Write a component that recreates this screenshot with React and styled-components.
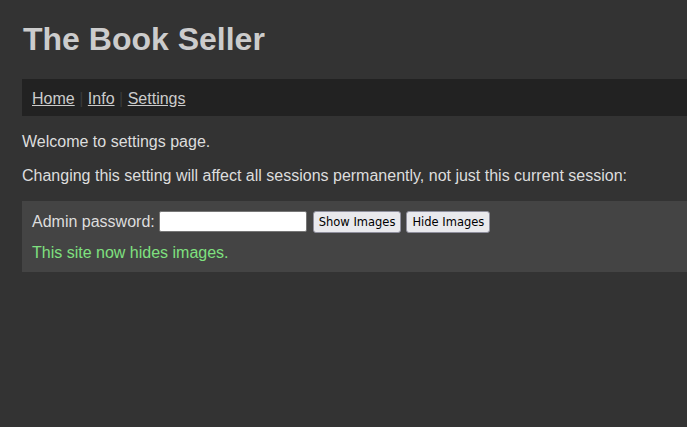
import styled, { createGlobalStyle } from "styled-components";

const GlobalStyle = createGlobalStyle`
  html, body {
    margin: 0;
    padding: 0;
    background: #333;
  }
  body {
    font-family: "Liberation Sans", Arial, sans-serif;
    font-size: 16px;
    color: #ddd;
  }
`;

const Page = styled.div`
  padding: 21px 0 0 22px;
`;

const Title = styled.h1`
  margin: 0 0 21px 1px;
  font-size: 32px;
  line-height: 37px;
  font-weight: bold;
  color: #ccc;
`;

const Nav = styled.nav`
  background: #222;
  padding: 11px 10px 8px;
  line-height: 18px;
`;

const NavLink = styled.a`
  color: #ccc;
  text-decoration: underline;
  cursor: pointer;
`;

const Sep = styled.span`
  color: #3a3a3a;
  margin: 0 4.5px;
`;

const Text = styled.p`
  margin: 17px 0 16px;
  line-height: 18px;

  & + & {
    margin-top: 16px;
  }
`;

const SettingsBox = styled.div`
  background: #444;
  padding: 10px;
  margin-top: 16px;
`;

const Row = styled.div`
  display: flex;
  align-items: center;
  gap: 5px;
  height: 21px;
`;

const Label = styled.span`
  margin-right: -1px;
`;

const Input = styled.input`
  width: 148px;
  height: 21px;
  box-sizing: border-box;
  border: 1px solid #767676;
  border-radius: 2px;
  background: #fff;
  padding: 0 2px;
  margin-right: 1px;
`;

const Button = styled.button`
  font-family: "DejaVu Sans", Tahoma, sans-serif;
  font-size: 11.5px;
  height: 22px;
  padding: 0 5px;
  background: #e9e9ed;
  color: #000;
  border: 1px solid #8f8f9d;
  border-radius: 3px;
  cursor: pointer;
`;

const Status = styled.div`
  color: #7fe07f;
  margin-top: 12px;
  line-height: 18px;
`;

export default function App() {
  return (
    <>
      <GlobalStyle />
      <Page>
        <Title>The Book Seller</Title>
        <Nav>
          <NavLink>Home</NavLink>
          <Sep>|</Sep>
          <NavLink>Info</NavLink>
          <Sep>|</Sep>
          <NavLink>Settings</NavLink>
        </Nav>
        <Text>Welcome to settings page.</Text>
        <Text>
          Changing this setting will affect all sessions permanently, not just
          this current session:
        </Text>
        <SettingsBox>
          <Row>
            <Label>Admin password:</Label>
            <Input type="password" />
            <Button>Show Images</Button>
            <Button>Hide Images</Button>
          </Row>
          <Status>This site now hides images.</Status>
        </SettingsBox>
      </Page>
    </>
  );
}
